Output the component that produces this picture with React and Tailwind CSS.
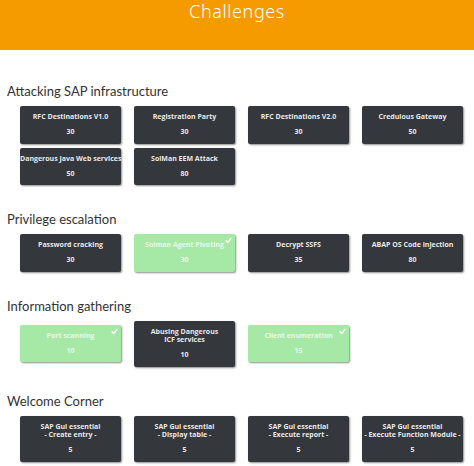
import React from "react";

const sections = [
  {
    title: "Attacking SAP infrastructure",
    items: [
      { name: ["RFC Destinations V1.0"], points: 30 },
      { name: ["Registration Party"], points: 30 },
      { name: ["RFC Destinations V2.0"], points: 30 },
      { name: ["Credulous Gateway"], points: 50 },
      { name: ["Dangerous Java Web services"], points: 50 },
      { name: ["SolMan EEM Attack"], points: 80 },
    ],
  },
  {
    title: "Privilege escalation",
    items: [
      { name: ["Password cracking"], points: 30 },
      { name: ["Solman Agent Pivoting"], points: 30, solved: true },
      { name: ["Decrypt SSFS"], points: 35 },
      { name: ["ABAP OS Code injection"], points: 80 },
    ],
  },
  {
    title: "Information gathering",
    items: [
      { name: ["Port scanning"], points: 10, solved: true },
      { name: ["Abusing Dangerous", "ICF services"], points: 10 },
      { name: ["Client enumeration"], points: 15, solved: true },
    ],
  },
  {
    title: "Welcome Corner",
    items: [
      { name: ["SAP Gui essential", "- Create entry -"], points: 5 },
      { name: ["SAP Gui essential", "- Display table -"], points: 5 },
      { name: ["SAP Gui essential", "- Execute report -"], points: 5 },
      { name: ["SAP Gui essential", "- Execute Function Module -"], points: 5 },
    ],
  },
];

const Card = ({ item }) => (
  <div
    className={`relative w-[101px] rounded-[2px] pt-[7px] pb-[7px] text-center font-bold text-[7px] leading-[8.5px] shadow-[1px_1px_2px_rgba(0,0,0,0.45)] ${
      item.solved ? "bg-[#a6e8a6] text-[#eaf8ea]" : "bg-[#34373c] text-[#e8e8e8]"
    }`}
  >
    {item.solved && (
      <svg
        className="absolute right-[3px] top-[3px] w-[7px] h-[7px]"
        viewBox="0 0 10 10"
        fill="none"
        stroke="#ffffff"
        strokeWidth="2"
        strokeLinecap="round"
        strokeLinejoin="round"
      >
        <path d="M1.5 5.5 L4 8 L8.5 2" />
      </svg>
    )}
    {item.name.map((l) => (
      <div key={l} className="whitespace-nowrap">{l}</div>
    ))}
    <div className="mt-[6.5px]">{item.points}</div>
  </div>
);

export default function App() {
  return (
    <div className="w-[474px] min-h-[466px] bg-white font-['Open_Sans',sans-serif]">
      <div className="h-[50px] bg-[#f59b00] text-center pt-[1px]">
        <h1 className="text-white text-[18px] font-light leading-[20px] tracking-[0.6px] font-['Noto_Sans',sans-serif]">
          Challenges
        </h1>
      </div>
      <div className="pt-[33px]">
        {sections.map((s) => (
          <div key={s.title} className="mb-[26px]">
            <h2 className="pl-[7px] text-[13px] leading-[17px] text-[#333] font-['Lato',sans-serif]">
              {s.title}
            </h2>
            <div className="mt-[6px] pl-[20px] flex flex-wrap items-center gap-x-[13px] gap-y-[4px] w-[474px]">
              {s.items.map((it) => (
                <Card key={it.name.join()} item={it} />
              ))}
            </div>
          </div>
        ))}
      </div>
    </div>
  );
}
